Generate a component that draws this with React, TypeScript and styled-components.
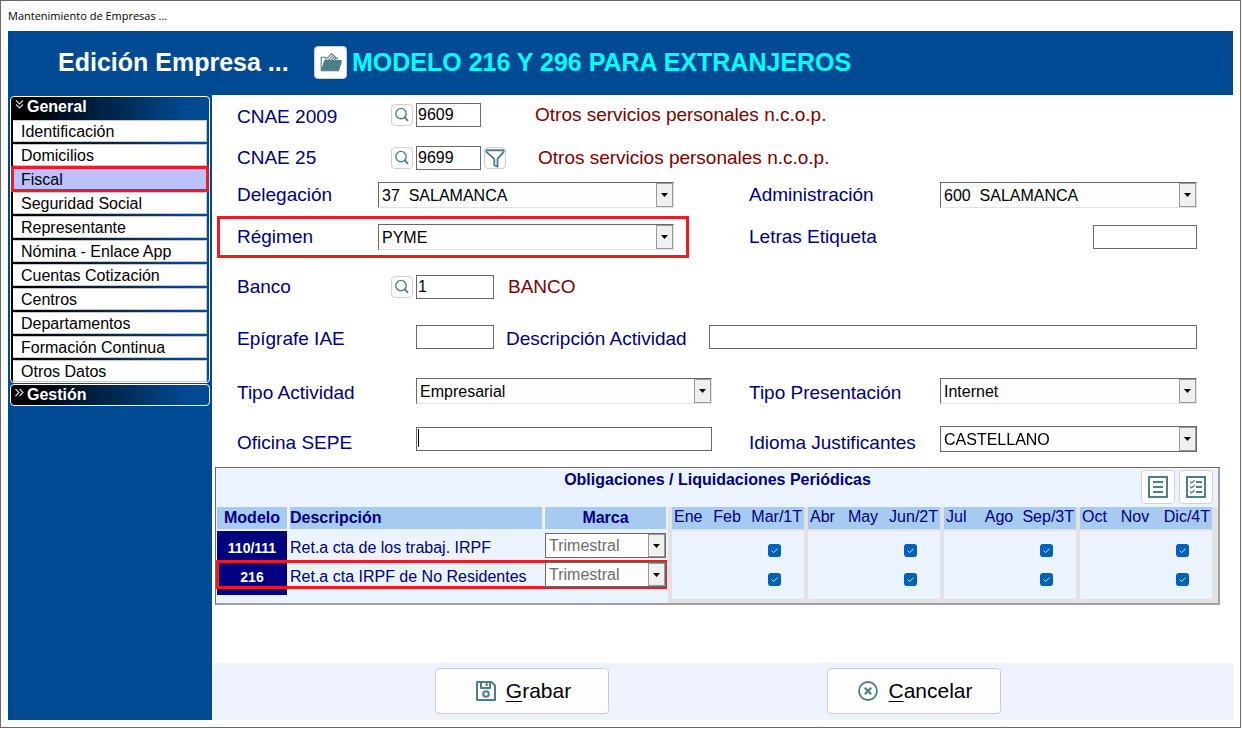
import React from "react";
import styled, { createGlobalStyle, css } from "styled-components";

const color = {
  blue: "#004a94",
  navy: "#000080",
  maroon: "#800000",
  cyan: "#00ffff",
  teal: "#4f7f86",
  red: "#ed1c24",
  pale: "#ebf4fe",
  band: "#a6caf0",
  grey: "#e2e2e2",
  line: "#696969",
};

const GlobalStyle = createGlobalStyle`
  *, *::before, *::after { box-sizing: border-box; }
  body {
    margin: 0;
    background: #fff;
    font-family: "Liberation Sans", Arial, sans-serif;
    font-size: 16px;
    color: #000;
  }
  button, input, select { font: inherit; color: inherit; margin: 0; }
`;

const Window = styled.div`
  display: flex;
  flex-direction: column;
  min-height: calc(100vh - 1px);
  margin: 0 1px 1px 0;
  padding: 0 7px 7px;
  border: 1px solid ${color.line};
`;

const TitleBar = styled.div`
  height: 30px;
  font-family: "Open Sans", "Noto Sans", sans-serif;
  font-size: 11px;
  line-height: 30px;
`;

const Header = styled.header`
  display: flex;
  align-items: center;
  height: 64px;
  padding: 0 0 2px 50px;
  background: ${color.blue};
  font-size: 25px;
  font-weight: bold;
  line-height: 32px;
`;

const HeaderTitle = styled.h1`
  width: 256px;
  margin: 0;
  font: inherit;
  color: #fff;
`;

const HeaderCompany = styled.span`
  margin-left: 5px;
  color: ${color.cyan};
`;

const IconButton = styled.button<{ $size: number }>`
  display: flex;
  flex: none;
  align-items: center;
  justify-content: center;
  width: ${(p) => p.$size}px;
  height: ${(p) => p.$size}px;
  padding: 0;
  border: 1px solid #d0d0d0;
  border-radius: 4px;
  background: #fdfdfd;
  color: ${color.teal};
`;

const Body = styled.div`
  display: flex;
  flex: 1;
`;

const Sidebar = styled.nav`
  display: flex;
  flex: none;
  flex-direction: column;
  gap: 1px;
  width: 204px;
  padding: 1px 2px;
  background: ${color.blue};
`;

const Group = styled.section`
  padding: 0 2px;
  border: 1px solid #fff;
  border-radius: 4px;
  background: linear-gradient(to right, #000 8%, ${color.blue} 90%);
`;

const GroupHead = styled.button<{ $open?: boolean }>`
  display: flex;
  align-items: flex-start;
  gap: 3px;
  width: 100%;
  height: ${(p) => (p.$open ? 23 : 20)}px;
  padding: 0 0 0 2px;
  border: 0;
  background: none;
  color: #fff;
  font-weight: bold;
  line-height: 19px;
  text-align: left;

  svg {
    margin-top: 3px;
  }
`;

const Items = styled.ul`
  display: flex;
  flex-direction: column;
  gap: 2px;
  margin: 0;
  padding: 0;
  list-style: none;
`;

const Item = styled.a<{ $active?: boolean }>`
  display: block;
  height: 22px;
  padding-left: 8px;
  border: solid #c8c8c8;
  border-width: 1px 1px 1px 0;
  background: #fff;
  color: #000;
  line-height: 21px;
  text-decoration: none;
  ${(p) =>
    p.$active &&
    css`
      position: relative;
      border-color: #b9c2ff;
      background: #b9c2ff;
      outline: 3px solid ${color.red};
      outline-offset: -1px;
    `}
`;

const Main = styled.main`
  display: flex;
  flex: 1;
  flex-direction: column;
  min-width: 0;
`;

const Form = styled.form`
  display: flex;
  flex-direction: column;
  padding: 0 36px 0 25px;
`;

const Row = styled.div<{ $height: number }>`
  display: flex;
  align-items: center;
  height: ${(p) => p.$height}px;
`;

const Half = styled.div<{ $grow?: boolean }>`
  display: flex;
  flex: ${(p) => (p.$grow ? "1" : "0 0 512px")};
  align-items: center;
  min-width: 0;
`;

const Marked = styled.div`
  display: flex;
  flex: none;
  align-items: center;
  width: 472px;
  height: 42px;
  margin: 0 60px 0 -20px;
  padding-left: 17px;
  border: 3px solid ${color.red};
`;

const Label = styled.label<{ $width: number; $drop?: number }>`
  flex: none;
  width: ${(p) => p.$width}px;
  padding-top: ${(p) => p.$drop ?? 0}px;
  color: ${color.navy};
  font-size: 19px;
  line-height: 24px;
  white-space: nowrap;
`;

const Value = styled.output<{ $gap: number }>`
  margin-left: ${(p) => p.$gap}px;
  color: ${color.maroon};
  font-size: 19px;
  line-height: 24px;
  white-space: nowrap;
`;

const TextBox = styled.input<{ $width?: number; $gap?: number }>`
  flex: ${(p) => (p.$width ? "none" : "1")};
  width: ${(p) => (p.$width ? `${p.$width}px` : "0")};
  height: 24px;
  margin-left: ${(p) => p.$gap ?? 0}px;
  padding: 0 1px;
  border: 1px solid ${color.line};
  border-radius: 0;
  outline: none;
  background: #fff;
`;

const CaretField = styled.div`
  position: relative;
  display: flex;

  input {
    caret-color: transparent;
  }
`;

const Caret = styled.span`
  position: absolute;
  top: 2px;
  bottom: 4px;
  left: 2px;
  width: 1px;
  background: #000;
  pointer-events: none;
`;

const SelectBox = styled.div<{ $width?: number; $framed?: boolean; $height: number }>`
  position: relative;
  flex: ${(p) => (p.$width ? "none" : "1")};
  width: ${(p) => (p.$width ? `${p.$width}px` : "auto")};
  height: ${(p) => p.$height}px;

  select {
    width: 100%;
    height: 100%;
    padding: 0 20px 0 3px;
    appearance: none;
    border: 1px solid ${color.line};
    border-right-color: ${(p) => (p.$framed ? color.line : color.grey)};
    border-bottom-color: ${(p) => (p.$framed ? color.line : color.grey)};
    border-radius: 0;
    background: #fdfdfd;
    opacity: 1;
  }

  select:disabled {
    color: #6d6d6d;
  }
`;

const DropArrow = styled.span`
  position: absolute;
  inset: 1px 1px 1px auto;
  display: flex;
  align-items: center;
  justify-content: center;
  width: 17px;
  border: 1px solid #999;
  background: #f0f0f0;
  pointer-events: none;
`;

const Panel = styled.section`
  margin: 6px 13px 0 3px;
  border: 2px solid #a0a0a0;
  border-top: 1px solid ${color.line};
  border-left: 1px solid ${color.line};
  background: ${color.pale};
  color: ${color.navy};
`;

const PanelFrame = styled.div`
  border: solid #f4f4f4;
  border-width: 1px 0 0 1px;
`;

const PanelHead = styled.div`
  display: grid;
  grid-template-columns: 1fr auto 1fr;
  height: 38px;
  padding: 1px 5px 0;
`;

const PanelTitle = styled.h2`
  grid-column: 2;
  margin: 0;
  font-size: 16px;
  line-height: 20px;
`;

const PanelTools = styled.div`
  display: flex;
  gap: 4px;
  justify-content: flex-end;
`;

const Grid = styled.table`
  width: 100%;
  table-layout: fixed;
  border-spacing: 0;
  line-height: 24px;

  th,
  td {
    padding: 0;
    border: 0 solid ${color.pale};
    text-align: left;
    vertical-align: top;
    white-space: nowrap;
  }

  thead th {
    height: 24px;
    border-bottom-width: 2px;
    background: ${color.band};
    line-height: 22px;
  }

  tbody tr {
    position: relative;
    height: 29px;
  }

  tbody tr:last-child {
    height: 43px;
  }
`;

const HeadCell = styled.th<{ $gap: number; $center?: boolean }>`
  && {
    border-right-width: ${(p) => p.$gap}px;
    text-align: ${(p) => (p.$center ? "center" : "left")};
  }
`;

const MonthHead = styled.th<{ $slot: number; $last?: boolean }>`
  && {
    padding: ${(p) => (p.$slot === 1 ? "0" : "0 2px")};
    border-color: ${color.grey};
    border-left-width: ${(p) => (p.$slot === 0 ? 4 : 0)}px;
    border-right-width: ${(p) => (p.$last ? 6 : 0)}px;
    font-weight: normal;
    line-height: 20px;
    text-align: ${(p) => ["left", "center", "right"][p.$slot]};
  }
`;

const ModelCell = styled.th<{ $last: boolean }>`
  && {
    padding-top: 5px;
    border-right-width: 3px;
    border-bottom-width: ${(p) => (p.$last ? 8 : 0)}px;
    background: ${color.navy};
    color: #fff;
    font-size: 14px;
    text-align: center;
  }
`;

const TextCell = styled.td`
  && {
    padding-top: 5px;
  }
`;

const MarkCell = styled.td`
  && {
    padding: 2px 2px 0 0;
  }
`;

const MonthCell = styled.td<{ $slot: number; $lastCol: boolean; $lastRow: boolean }>`
  && {
    padding: ${(p) => (p.$slot === 2 ? "13px 0 0 20px" : "0")};
    border-color: ${color.grey};
    border-left-width: ${(p) => (p.$slot === 0 ? 4 : 0)}px;
    border-right-width: ${(p) => (p.$lastCol ? 6 : 0)}px;
    border-bottom-width: ${(p) => (p.$lastRow ? 4 : 0)}px;
    line-height: 13px;
  }
`;

const RowMark = styled.span`
  position: absolute;
  inset: 0 551px auto -1px;
  height: 29px;
  border: 3px solid ${color.red};
  pointer-events: none;
`;

const Tick = styled.span`
  display: inline-grid;
  width: 13px;
  height: 13px;
  vertical-align: top;

  input,
  svg {
    grid-area: 1 / 1;
    width: 13px;
    height: 13px;
  }

  input {
    appearance: none;
    border-radius: 3px;
    background: #005fb8;
  }

  svg {
    z-index: 1;
    pointer-events: none;
  }
`;

const Footer = styled.footer`
  display: flex;
  align-items: center;
  justify-content: center;
  gap: 218px;
  height: 57px;
  margin-top: auto;
  padding: 0 9px 2px 0;
  background: #eef2fc;
`;

const ActionButton = styled.button`
  display: flex;
  align-items: center;
  justify-content: center;
  gap: 9px;
  width: 174px;
  height: 46px;
  padding: 0 0 0 2px;
  border: 1px solid #ccc;
  border-radius: 4px;
  background: #fdfdfd;
  font-size: 21px;
  line-height: 24px;

  svg {
    flex: none;
    color: ${color.teal};
  }

  u {
    text-decoration-thickness: 1px;
    text-underline-offset: 3px;
  }
`;

const FilterSlot = styled.div`
  margin-left: 3px;
`;

const RightSlot = styled.div`
  display: flex;
  flex: 1;
  justify-content: flex-end;
`;

const DescriptionSlot = styled.div`
  display: flex;
  flex: 1;
  align-items: center;
  margin-left: 12px;
`;

const SearchIcon = () => (
  <svg width="16" height="16" viewBox="0 0 16 16" fill="none" stroke="currentColor" strokeWidth="1.4">
    <circle cx="7" cy="6.6" r="5.2" />
    <path d="M10.6 10.2 14 13.8" strokeWidth="1.8" />
  </svg>
);

const FunnelIcon = () => (
  <svg width="22" height="22" viewBox="0 0 22 22" fill="none" stroke="currentColor" strokeWidth="2" strokeLinejoin="round">
    <path d="M1.5 2.5h19v1.8L13.8 12v8.6l-3.6-1.8V12L1.5 4.3z" />
  </svg>
);

const FolderIcon = () => (
  <svg width="22" height="20" viewBox="0 0 22 20" fill="none" stroke="currentColor" strokeWidth="1.1">
    <path d="M1.2 18V5.3h4.4l.8 1.4" />
    <path d="M5.6 8 11.4 1.6 18 7.4M8.4 8.2l4.4-4.6M11.2 8.2l3.4-3.2M14 8.2l2.2-2" />
    <path d="M4.8 8.6h16.2V11l-2.6 7.8H1.4z" fill="currentColor" />
  </svg>
);

const ListIcon = () => (
  <svg width="20" height="24" viewBox="0 0 20 24" fill="none" stroke="currentColor" strokeWidth="2">
    <path d="M1 2h18v20H1z" />
    <path d="M5 7h10M5 12h10M5 17h10" />
  </svg>
);

const ChecklistIcon = () => (
  <svg width="20" height="24" viewBox="0 0 20 24" fill="none" stroke="currentColor" strokeWidth="2">
    <path d="M1 2h18v20H1z" />
    <path d="M10 7h6M10 12h6M10 17h6" />
    <path d="M4 6.6 5.6 8l3.2-2.8M4 11.6 5.6 13l3.2-2.8M4 16.6 5.6 18l3.2-2.8" strokeWidth="1.3" />
  </svg>
);

const SaveIcon = () => (
  <svg width="22" height="22" viewBox="0 0 22 22" fill="none" stroke="currentColor" strokeWidth="2" strokeLinejoin="round">
    <path d="M2 2h14.5L20 5.5V20H2z" />
    <path d="M6 2v6h9V2M11.6 3v3" />
    <circle cx="11" cy="14" r="2.8" />
  </svg>
);

const CancelIcon = () => (
  <svg width="22" height="22" viewBox="0 0 22 22" fill="none" stroke="currentColor" strokeWidth="1.8">
    <circle cx="11" cy="11" r="9" />
    <path d="m7.8 7.8 6.4 6.4M14.2 7.8l-6.4 6.4" strokeWidth="2.2" />
  </svg>
);

const Chevrons = ({ open }: { open?: boolean }) => (
  <svg width="9" height="9" viewBox="0 0 9 9" fill="none" stroke="#d8d8d8" strokeWidth="1.2">
    <path d={open ? "M1 .5 4.5 4 8 .5M1 4.5 4.5 8 8 4.5" : "M.5 1 4 4.5.5 8M4.5 1 8 4.5 4.5 8"} />
  </svg>
);

type DropdownProps = {
  id?: string;
  label?: string;
  value: string;
  width?: number;
  height?: number;
  framed?: boolean;
  disabled?: boolean;
};

const Dropdown = ({ id, label, value, width, height = 26, framed, disabled }: DropdownProps) => (
  <SelectBox $width={width} $height={height} $framed={framed}>
    <select id={id} aria-label={label} disabled={disabled} defaultValue={value}>
      <option>{value}</option>
    </select>
    <DropArrow>
      <svg width="7" height="4" viewBox="0 0 7 4">
        <path d="M0 0h7L3.5 4z" />
      </svg>
    </DropArrow>
  </SelectBox>
);

const Lookup = ({ label }: { label: string }) => (
  <IconButton type="button" $size={22} aria-label={label}>
    <SearchIcon />
  </IconButton>
);

const sections = [
  "Identificación",
  "Domicilios",
  "Fiscal",
  "Seguridad Social",
  "Representante",
  "Nómina - Enlace App",
  "Cuentas Cotización",
  "Centros",
  "Departamentos",
  "Formación Continua",
  "Otros Datos",
];

const months = ["Ene", "Feb", "Mar/1T", "Abr", "May", "Jun/2T", "Jul", "Ago", "Sep/3T", "Oct", "Nov", "Dic/4T"];
const slotWidths = [38, 42, 56];

const models = [
  { code: "110/111", text: "Ret.a cta de los trabaj. IRPF", mark: "Trimestral" },
  { code: "216", text: "Ret.a cta IRPF de No Residentes", mark: "Trimestral", marked: true },
];

export default function App() {
  return (
    <>
      <GlobalStyle />
      <Window>
        <TitleBar>Mantenimiento de Empresas ...</TitleBar>
        <Header>
          <HeaderTitle>Edición Empresa ...</HeaderTitle>
          <IconButton type="button" $size={33} aria-label="Abrir empresa">
            <FolderIcon />
          </IconButton>
          <HeaderCompany>MODELO 216 Y 296 PARA EXTRANJEROS</HeaderCompany>
        </Header>
        <Body>
          <Sidebar>
            <Group>
              <GroupHead type="button" $open>
                <Chevrons open />
                General
              </GroupHead>
              <Items>
                {sections.map((name) => (
                  <li key={name}>
                    <Item href="#" $active={name === "Fiscal"}>
                      {name}
                    </Item>
                  </li>
                ))}
              </Items>
            </Group>
            <Group>
              <GroupHead type="button">
                <Chevrons />
                Gestión
              </GroupHead>
            </Group>
          </Sidebar>
          <Main>
            <Form>
              <Row $height={40}>
                <Label htmlFor="cnae2009" $width={154} $drop={4}>CNAE 2009</Label>
                <Lookup label="Buscar CNAE 2009" />
                <TextBox id="cnae2009" $width={65} $gap={3} defaultValue="9609" />
                <Value $gap={54}>Otros servicios personales n.c.o.p.</Value>
              </Row>
              <Row $height={46}>
                <Label htmlFor="cnae25" $width={154}>CNAE 25</Label>
                <Lookup label="Buscar CNAE 25" />
                <TextBox id="cnae25" $width={65} $gap={3} defaultValue="9699" />
                <FilterSlot>
                  <IconButton type="button" $size={22} aria-label="Filtrar">
                    <FunnelIcon />
                  </IconButton>
                </FilterSlot>
                <Value $gap={32}>Otros servicios personales n.c.o.p.</Value>
              </Row>
              <Row $height={28}>
                <Half>
                  <Label htmlFor="delegacion" $width={141}>Delegación</Label>
                  <Dropdown id="delegacion" width={296} value={"37\u00a0\u00a0SALAMANCA"} />
                </Half>
                <Half $grow>
                  <Label htmlFor="administracion" $width={191}>Administración</Label>
                  <Dropdown id="administracion" value={"600\u00a0\u00a0SALAMANCA"} />
                </Half>
              </Row>
              <Row $height={56}>
                <Marked>
                  <Label htmlFor="regimen" $width={141}>Régimen</Label>
                  <Dropdown id="regimen" width={296} value="PYME" />
                </Marked>
                <Half $grow>
                  <Label htmlFor="letras" $width={191}>Letras Etiqueta</Label>
                  <RightSlot>
                    <TextBox id="letras" $width={104} />
                  </RightSlot>
                </Half>
              </Row>
              <Row $height={44}>
                <Label htmlFor="banco" $width={154}>Banco</Label>
                <Lookup label="Buscar banco" />
                <TextBox id="banco" $width={78} $gap={3} defaultValue="1" />
                <Value $gap={14}>BANCO</Value>
              </Row>
              <Row $height={56}>
                <Label htmlFor="epigrafe" $width={179} $drop={4}>Epígrafe IAE</Label>
                <TextBox id="epigrafe" $width={78} />
                <DescriptionSlot>
                  <Label htmlFor="descripcion" $width={203} $drop={4}>Descripción Actividad</Label>
                  <TextBox id="descripcion" />
                </DescriptionSlot>
              </Row>
              <Row $height={52}>
                <Half>
                  <Label htmlFor="tipoActividad" $width={179} $drop={4}>Tipo Actividad</Label>
                  <Dropdown id="tipoActividad" width={296} value="Empresarial" />
                </Half>
                <Half $grow>
                  <Label htmlFor="tipoPresentacion" $width={191} $drop={4}>Tipo Presentación</Label>
                  <Dropdown id="tipoPresentacion" value="Internet" />
                </Half>
              </Row>
              <Row $height={44}>
                <Half>
                  <Label htmlFor="sepe" $width={179} $drop={8}>Oficina SEPE</Label>
                  <CaretField>
                    <TextBox id="sepe" $width={296} autoFocus />
                    <Caret />
                  </CaretField>
                </Half>
                <Half $grow>
                  <Label htmlFor="idioma" $width={191} $drop={8}>Idioma Justificantes</Label>
                  <Dropdown id="idioma" framed value="CASTELLANO" />
                </Half>
              </Row>
            </Form>
            <Panel>
              <PanelFrame>
                <PanelHead>
                  <PanelTitle>Obligaciones / Liquidaciones Periódicas</PanelTitle>
                  <PanelTools>
                    <IconButton type="button" $size={34} aria-label="Listado">
                      <ListIcon />
                    </IconButton>
                    <IconButton type="button" $size={34} aria-label="Lista de control">
                      <ChecklistIcon />
                    </IconButton>
                  </PanelTools>
                </PanelHead>
                <Grid>
                  <colgroup>
                    <col width={73} />
                    <col />
                    <col width={123} />
                    {months.map((m, i) => (
                      <col key={m} width={slotWidths[i % 3] + (i === 11 ? 6 : 0)} />
                    ))}
                  </colgroup>
                  <thead>
                    <tr>
                      <HeadCell $gap={3} $center>Modelo</HeadCell>
                      <HeadCell $gap={3}>Descripción</HeadCell>
                      <HeadCell $gap={2} $center>Marca</HeadCell>
                      {months.map((m, i) => (
                        <MonthHead key={m} $slot={i % 3} $last={i === 11}>
                          {m}
                        </MonthHead>
                      ))}
                    </tr>
                  </thead>
                  <tbody>
                    {models.map((row, r) => (
                      <tr key={row.code}>
                        <ModelCell scope="row" $last={r === models.length - 1}>
                          {row.code}
                          {row.marked && <RowMark />}
                        </ModelCell>
                        <TextCell>{row.text}</TextCell>
                        <MarkCell>
                          <Dropdown label={`Marca ${row.code}`} height={25} framed disabled value={row.mark} />
                        </MarkCell>
                        {months.map((m, i) => (
                          <MonthCell key={m} $slot={i % 3} $lastCol={i === 11} $lastRow={r === models.length - 1}>
                            {i % 3 === 2 && (
                              <Tick>
                                <input type="checkbox" defaultChecked aria-label={`${row.code} ${m}`} />
                                <svg viewBox="0 0 13 13" fill="none" stroke="#cfe6fb" strokeWidth="1">
                                  <path d="M3.5 6.5 5.6 8.6 9.6 4.6" />
                                </svg>
                              </Tick>
                            )}
                          </MonthCell>
                        ))}
                      </tr>
                    ))}
                  </tbody>
                </Grid>
              </PanelFrame>
            </Panel>
            <Footer>
              <ActionButton type="button">
                <SaveIcon />
                <span><u>G</u>rabar</span>
              </ActionButton>
              <ActionButton type="button">
                <CancelIcon />
                <span><u>C</u>ancelar</span>
              </ActionButton>
            </Footer>
          </Main>
        </Body>
      </Window>
    </>
  );
}
